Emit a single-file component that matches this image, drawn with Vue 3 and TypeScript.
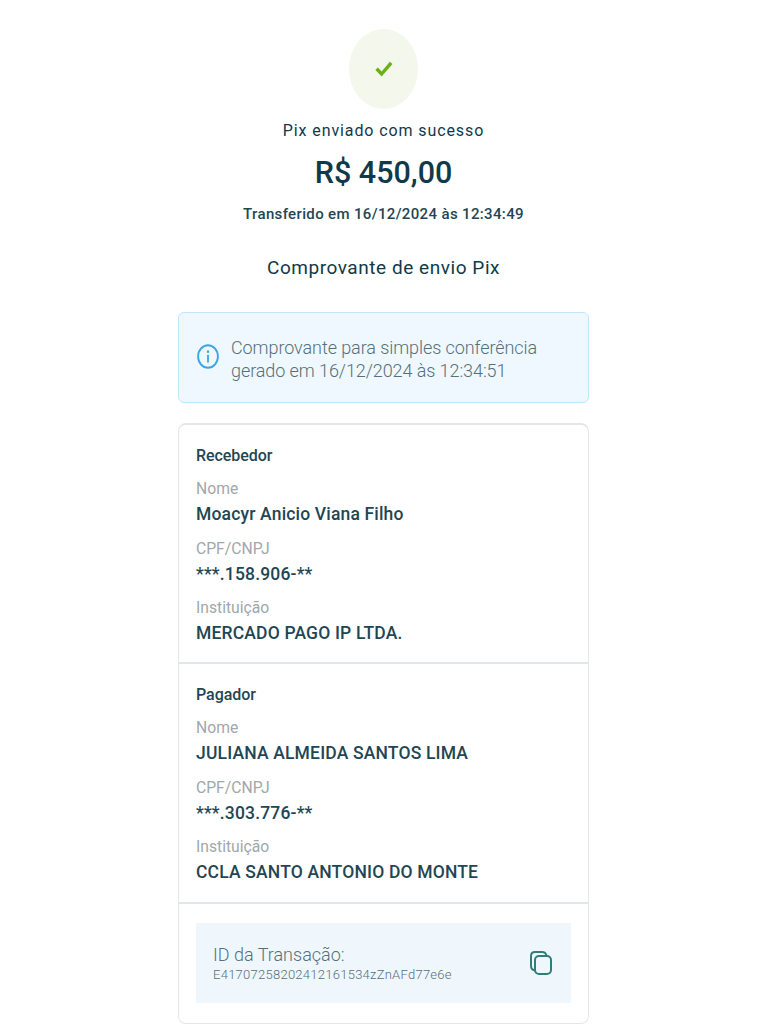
<script setup lang="ts">
interface Field { label: string; value: string }
interface Party { title: string; fields: Field[] }
const parties: Party[] = [
  { title: 'Recebedor', fields: [
    { label: 'Nome', value: 'Moacyr Anicio Viana Filho' },
    { label: 'CPF/CNPJ', value: '***.158.906-**' },
    { label: 'Instituição', value: 'MERCADO PAGO IP LTDA.' },
  ] },
  { title: 'Pagador', fields: [
    { label: 'Nome', value: 'JULIANA ALMEIDA SANTOS LIMA' },
    { label: 'CPF/CNPJ', value: '***.303.776-**' },
    { label: 'Instituição', value: 'CCLA SANTO ANTONIO DO MONTE' },
  ] },
]
</script>

<template>
  <main class="page">
    <div class="badge">
      <svg width="20" height="20" viewBox="0 0 20 20" fill="none">
        <path d="M2.600 9.800 L7.600 15 L17.200 3.800" stroke="#6cb216" stroke-width="3.400" />
      </svg>
    </div>
    <p class="sent">Pix enviado com sucesso</p>
    <p class="amount">R$ 450,00</p>
    <p class="when">Transferido em 16/12/2024 às 12:34:49</p>
    <h1 class="heading">Comprovante de envio Pix</h1>

    <div class="notice">
      <svg class="info" width="22" height="25" viewBox="0 0 24 24" preserveAspectRatio="none" fill="none">
        <circle cx="12" cy="12" r="10.800" stroke="#3aa6ea" stroke-width="2" />
        <circle cx="12" cy="7.400" r="1.300" fill="#3aa6ea" />
        <rect x="11" y="10.400" width="2" height="7.400" fill="#3aa6ea" />
      </svg>
      <p>Comprovante para simples conferência<br />gerado em 16/12/2024 às 12:34:51</p>
    </div>

    <section class="card">
      <div v-for="party in parties" :key="party.title" class="party">
        <h2>{{ party.title }}</h2>
        <div v-for="field in party.fields" :key="field.label" class="field">
          <span class="label">{{ field.label }}</span>
          <span class="value">{{ field.value }}</span>
        </div>
      </div>
      <div class="foot">
        <div class="txn">
          <div>
            <div class="txn-label">ID da Transação:</div>
            <div class="txn-id">E41707258202412161534zZnAFd77e6e</div>
          </div>
          <svg width="24" height="26" viewBox="0 0 24 26" fill="none" stroke="#2f7f78" stroke-width="2">
            <rect x="6" y="6" width="16" height="18" rx="4" />
            <path d="M6 20.500 C3 20 2 18.500 2 16 V6 C2 3.500 3.500 2 6 2 H13 C15.500 2 17 3.500 17.500 5.500" />
          </svg>
        </div>
      </div>
    </section>
  </main>
</template>

<style>
html, body { margin: 0; background: #fff; }
</style>

<style scoped>
.page {
  width: 411px;
  margin-left: 178px;
  height: 1024px;
  overflow: hidden;
  padding-top: 29px;
  box-sizing: border-box;
  display: flex;
  flex-direction: column;
  align-items: center;
  font-family: Roboto, "Noto Sans", sans-serif;
  color: #10394a;
}
p, h1, h2 { margin: 0; font-weight: 400; }
.badge {
  width: 69px;
  height: 80px;
  border-radius: 50%;
  background: #f3f7ec;
  display: flex;
  align-items: center;
  justify-content: center;
}
.sent { margin-top: 11px; font-size: 16px; line-height: 22px; letter-spacing: 0.9px; }
.amount { margin-top: 10px; font-size: 30.5px; line-height: 42px; font-weight: 500; }
.when { margin-top: 9px; font-size: 15px; line-height: 22px; font-weight: 500; letter-spacing: 0.35px; color: #1f4654; white-space: nowrap; }
.heading { margin-top: 29px; font-size: 19px; line-height: 28px; letter-spacing: 0.55px; }
.notice {
  margin-top: 30px;
  width: 100%;
  height: 91px;
  box-sizing: border-box;
  display: flex;
  align-items: center;
  gap: 12px;
  padding: 0 18px;
  background: #eff8fe;
  border: 1px solid #bfe6fb;
  border-radius: 6px;
}
.notice p { padding-top: 3px; font-size: 18px; line-height: 23px; letter-spacing: -0.08px; font-weight: 300; color: #55707a; white-space: nowrap; }
.info { flex: none; margin-top: -2px; }
.card {
  margin-top: 20px;
  width: 100%;
  box-sizing: border-box;
  border: 1px solid #e4e7ea;
  border-top: 2px solid #e4e7ea;
  border-radius: 8px;
  flex: none;
}
.party {
  height: 239px;
  box-sizing: border-box;
  padding: 20px 17px 0;
  border-bottom: 2px solid #e4e7ea;
}
.party + .party { height: 240px; padding-top: 20px; }
.party h2 { font-size: 16px; line-height: 22px; font-weight: 500; letter-spacing: -0.05px; color: #1f4654; }
.field { display: flex; flex-direction: column; margin-top: 11px; }
.field + .field { margin-top: 9.5px; }
.label { font-size: 15.7px; line-height: 22px; color: #a0a8ab; }
.value { font-size: 17.5px; line-height: 28px; font-weight: 500; letter-spacing: 0.17px; color: #1f4654; }
.foot { padding: 19px 17px 20px; }
.txn {
  height: 80px;
  display: flex;
  align-items: center;
  justify-content: space-between;
  padding: 0 18px 0 17px;
  background: #eff7fd;
}
.txn-label { font-size: 18px; line-height: 22px; font-weight: 300; color: #55707a; }
.txn-id { margin-top: 1px; font-size: 13px; line-height: 16px; font-weight: 300; letter-spacing: 0.26px; color: #55707a; }
</style>
